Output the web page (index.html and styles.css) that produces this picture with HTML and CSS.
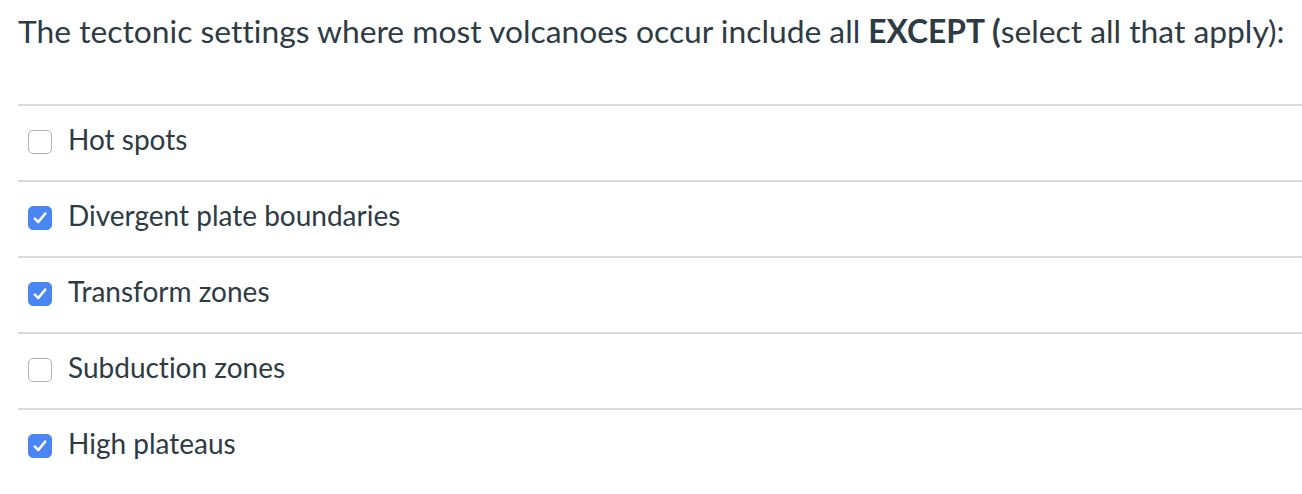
FILE: index.html
```html
<!DOCTYPE html>
<html lang="en">
<head>
    <meta charset="UTF-8">
    <title>Question</title>
    <link rel="stylesheet" href="styles.css">
</head>
<body>
    <div class="question">
        <p class="question-text">The tectonic settings where most volcanoes occur include all <strong>EXCEPT (</strong>select all that apply):</p>

        <ul class="answers">
            <li class="answer">
                <span class="box"></span>
                <span class="label">Hot spots</span>
            </li>
            <li class="answer">
                <span class="box checked">
                    <svg width="16" height="16" viewBox="0 0 16 16" fill="none">
                        <path d="M2.8 8.6L6.3 12L13.2 3.6" stroke="#fff" stroke-width="2.6" stroke-linecap="round" stroke-linejoin="round"/>
                    </svg>
                </span>
                <span class="label">Divergent plate boundaries</span>
            </li>
            <li class="answer">
                <span class="box checked">
                    <svg width="16" height="16" viewBox="0 0 16 16" fill="none">
                        <path d="M2.8 8.6L6.3 12L13.2 3.6" stroke="#fff" stroke-width="2.6" stroke-linecap="round" stroke-linejoin="round"/>
                    </svg>
                </span>
                <span class="label">Transform zones</span>
            </li>
            <li class="answer">
                <span class="box"></span>
                <span class="label">Subduction zones</span>
            </li>
            <li class="answer">
                <span class="box checked">
                    <svg width="16" height="16" viewBox="0 0 16 16" fill="none">
                        <path d="M2.8 8.6L6.3 12L13.2 3.6" stroke="#fff" stroke-width="2.6" stroke-linecap="round" stroke-linejoin="round"/>
                    </svg>
                </span>
                <span class="label">High plateaus</span>
            </li>
        </ul>
    </div>
</body>
</html>
```

FILE: styles.css
```css
* {
    margin: 0;
    padding: 0;
    box-sizing: border-box;
}

body {
    background: #fff;
    color: #2d3b45;
    font-family: Lato, 'Liberation Sans', sans-serif;
    font-variant-ligatures: none;
}

.question {
    padding-left: 18px;
}

.question-text {
    font-size: 31.8px;
    line-height: 38px;
    padding-top: 12px;
    padding-bottom: 54px;
}

.question-text strong {
    font-weight: 700;
}

.answers {
    list-style: none;
}

.answer {
    display: flex;
    align-items: center;
    gap: 16px;
    height: 76px;
    padding-left: 10px;
    padding-bottom: 8px;
    border-top: 2px solid #dadada;
    font-size: 28px;
}

.box {
    width: 24px;
    height: 24px;
    margin-top: 6px;
    border: 1.5px solid #b0b0b0;
    border-radius: 5px;
    display: flex;
    align-items: center;
    justify-content: center;
    flex-shrink: 0;
}

.box.checked {
    background: #4a86f3;
    border-color: #4a86f3;
}
```
